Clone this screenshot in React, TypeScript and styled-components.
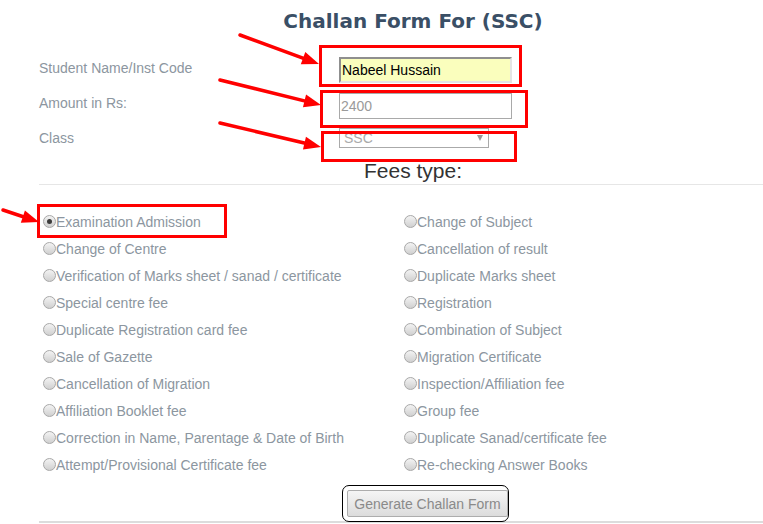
import React from "react";
import styled, { createGlobalStyle } from "styled-components";

const GlobalStyle = createGlobalStyle`
  html, body { margin: 0; padding: 0; background: #ffffff; overflow: hidden; }
  body { font-family: "Liberation Sans", Arial, sans-serif; }
`;

const Page = styled.div`
  position: relative;
  width: 763px;
  height: 524px;
  overflow: hidden;
  padding-left: 39px;
  box-sizing: border-box;
`;

const Form = styled.div`
  width: 748px;
  display: flex;
  flex-direction: column;
`;

const Title = styled.h2`
  margin: 9px 0 0;
  font-family: "DejaVu Sans", Verdana, sans-serif;
  font-weight: bold;
  font-size: 20px;
  line-height: 24px;
  color: #3a4f66;
  text-align: center;
`;

const Fields = styled.div`
  margin-top: 24px;
  display: flex;
  flex-direction: column;
`;

const FieldRow = styled.div<{ $top: number }>`
  display: grid;
  grid-template-columns: 300px auto;
  align-items: start;
  margin-top: ${(p) => p.$top}px;
`;

const Label = styled.label<{ $offset: number }>`
  font-size: 14px;
  line-height: 16px;
  color: #8c96a0;
  padding-top: ${(p) => p.$offset}px;
`;

const TextInput = styled.input<{ $filled?: boolean }>`
  box-sizing: border-box;
  width: 173px;
  height: 26px;
  margin: 0;
  padding: 0 0 0 1px;
  font-family: "Liberation Sans", Arial, sans-serif;
  font-size: 14px;
  outline: none;
  ${(p) =>
    p.$filled
      ? `background: #fafebd; color: #000; border: 2px solid; border-color: #8f8f8f #e4e4e4 #e4e4e4 #8f8f8f;`
      : `background: #fff; color: #9a9a9a; border: 1px solid #a9a9a9;`}
`;

const SelectBox = styled.div`
  box-sizing: border-box;
  width: 150px;
  height: 20px;
  border: 1px solid #aaaaaa;
  display: flex;
  align-items: center;
  justify-content: space-between;
  padding: 0 5px 0 4px;
  font-size: 14px;
  color: #aaaaaa;
`;

const Caret = styled.span`
  width: 0;
  height: 0;
  border-left: 3.5px solid transparent;
  border-right: 3.5px solid transparent;
  border-top: 6px solid #9a9a9a;
`;

const FeesTitle = styled.div`
  margin-top: 11px;
  text-align: center;
  font-size: 21px;
  line-height: 24px;
  color: #333333;
`;

const Divider = styled.div`
  margin-top: 1px;
  height: 1px;
  background: #e6e6e6;
`;

const RadioGrid = styled.div`
  margin-top: 24px;
  padding-left: 4px;
  display: grid;
  grid-template-columns: 361px 361px;
  grid-template-rows: repeat(10, 27px);
  grid-auto-flow: column;
`;

const RadioItem = styled.label`
  display: flex;
  align-items: flex-start;
  font-size: 14px;
  line-height: 27px;
  color: #8c96a0;
  white-space: nowrap;
`;

const RadioCircle = styled.span<{ $checked?: boolean }>`
  position: relative;
  box-sizing: border-box;
  flex-shrink: 0;
  width: 13px;
  height: 13px;
  margin-top: 6px;
  border-radius: 50%;
  border: 1px solid #a8a8a8;
  background: linear-gradient(#f3f3f3, #d0d0d0);
  &::after {
    content: "";
    display: ${(p) => (p.$checked ? "block" : "none")};
    position: absolute;
    left: 3px;
    top: 3px;
    width: 5px;
    height: 5px;
    border-radius: 50%;
    background: #3c3c3c;
  }
`;

const Footer = styled.div`
  padding-top: 6px;
  border-bottom: 2px solid #dcdcdc;
`;

const ButtonFrame = styled.div`
  margin-left: 303px;
  margin-bottom: -1px;
  width: fit-content;
  border: 1px solid #000;
  border-radius: 7px;
  padding: 4px 0 4px 4px;
  background: #fff;
`;

const Button = styled.button`
  box-sizing: border-box;
  width: 161px;
  height: 27px;
  margin: 0;
  padding: 0;
  border: 1px solid #adadad;
  border-radius: 2px;
  background: linear-gradient(#f5f5f5, #dcdcdc);
  color: #8a8a8a;
  font-family: "Liberation Sans", Arial, sans-serif;
  font-size: 14px;
  display: block;
`;

const Overlay = styled.svg`
  position: absolute;
  left: 0;
  top: 0;
  pointer-events: none;
`;

const leftItems = [
  "Examination Admission",
  "Change of Centre",
  "Verification of Marks sheet / sanad / certificate",
  "Special centre fee",
  "Duplicate Registration card fee",
  "Sale of Gazette",
  "Cancellation of Migration",
  "Affiliation Booklet fee",
  "Correction in Name, Parentage & Date of Birth",
  "Attempt/Provisional Certificate fee",
];

const rightItems = [
  "Change of Subject",
  "Cancellation of result",
  "Duplicate Marks sheet",
  "Registration",
  "Combination of Subject",
  "Migration Certificate",
  "Inspection/Affiliation fee",
  "Group fee",
  "Duplicate Sanad/certificate fee",
  "Re-checking Answer Books",
];

type ArrowSpec = { x1: number; y1: number; x2: number; y2: number };

const arrows: ArrowSpec[] = [
  { x1: 240, y1: 35, x2: 319, y2: 64 },
  { x1: 220, y1: 80, x2: 321, y2: 105 },
  { x1: 220, y1: 123, x2: 321, y2: 147 },
  { x1: 3, y1: 210, x2: 39, y2: 222 },
];

const boxes = [
  { x: 320.5, y: 46.5, w: 200, h: 39 },
  { x: 321.5, y: 91.5, w: 205, h: 35 },
  { x: 322.5, y: 132.5, w: 193, h: 28 },
  { x: 38.5, y: 205.5, w: 187, h: 31 },
];

function Arrow({ x1, y1, x2, y2 }: ArrowSpec) {
  const dx = x2 - x1;
  const dy = y2 - y1;
  const len = Math.hypot(dx, dy);
  const ux = dx / len;
  const uy = dy / len;
  const headLen = 17;
  const half = 6.5;
  const bx = x2 - ux * headLen;
  const by = y2 - uy * headLen;
  const px = -uy * half;
  const py = ux * half;
  const pts = `${x2},${y2} ${bx + px},${by + py} ${bx - px},${by - py}`;
  return (
    <g>
      <line x1={x1} y1={y1} x2={bx + ux * 2} y2={by + uy * 2} stroke="#ff0000" strokeWidth={3.5} strokeLinecap="round" />
      <polygon points={pts} fill="#ff0000" />
    </g>
  );
}

export default function App() {
  return (
    <>
      <GlobalStyle />
      <Page>
        <Form>
          <Title>Challan Form For (SSC)</Title>
          <Fields>
            <FieldRow $top={0}>
              <Label $offset={3}>Student Name/Inst Code</Label>
              <TextInput $filled readOnly value="Nabeel Hussain" />
            </FieldRow>
            <FieldRow $top={10}>
              <Label $offset={2}>Amount in Rs:</Label>
              <TextInput readOnly value="2400" />
            </FieldRow>
            <FieldRow $top={9}>
              <Label $offset={2}>Class</Label>
              <SelectBox>
                <span>SSC</span>
                <Caret />
              </SelectBox>
            </FieldRow>
          </Fields>
          <FeesTitle>Fees type:</FeesTitle>
          <Divider />
          <RadioGrid>
            {leftItems.map((t, i) => (
              <RadioItem key={"l" + i}>
                <RadioCircle $checked={i === 0} />
                {t}
              </RadioItem>
            ))}
            {rightItems.map((t, i) => (
              <RadioItem key={"r" + i}>
                <RadioCircle />
                {t}
              </RadioItem>
            ))}
          </RadioGrid>
          <Footer>
            <ButtonFrame>
              <Button type="button">Generate Challan Form</Button>
            </ButtonFrame>
          </Footer>
        </Form>
        <Overlay width={763} height={524} viewBox="0 0 763 524">
          {boxes.map((b, i) => (
            <rect key={i} x={b.x} y={b.y} width={b.w} height={b.h} fill="none" stroke="#ff0000" strokeWidth={3} />
          ))}
          {arrows.map((a, i) => (
            <Arrow key={i} {...a} />
          ))}
        </Overlay>
      </Page>
    </>
  );
}
